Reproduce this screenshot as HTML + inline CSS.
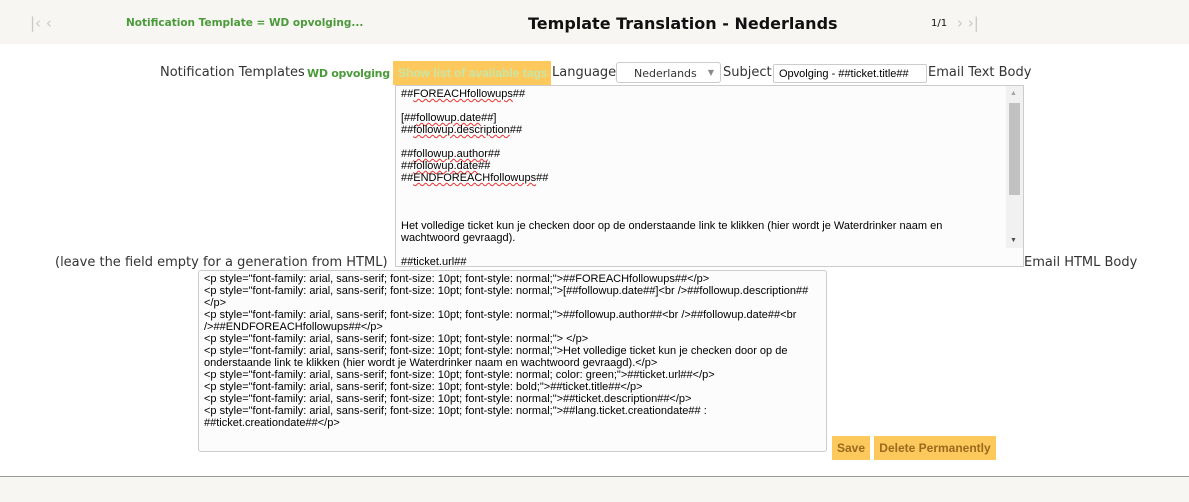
<!DOCTYPE html>
<html><head><style>
body{margin:0;width:1189px;height:501px;position:relative;background:#fff;font-family:"DejaVu Sans",Verdana,sans-serif;overflow:hidden}
.a{position:absolute;white-space:nowrap}
.hdr{position:absolute;left:0;top:0;width:1189px;height:44px;background:#f7f6f2}
.lbl{font-size:13px;color:#333}
.ta{position:absolute;background:#fcfcfc;border:1px solid #ccc;font-family:"Liberation Sans",Arial,sans-serif;font-size:11px;line-height:12px;color:#000;box-sizing:border-box;overflow:hidden}
.btn{position:absolute;background:#fdc95c;color:#9a6a1e;font-family:"Liberation Sans",Arial,sans-serif;font-weight:bold;font-size:12px;text-align:center;line-height:24px;height:24px}
u{text-decoration:underline wavy #e33;text-decoration-thickness:1px}
</style></head><body>
<div class="hdr"></div>
<div class="a" style="left:30px;top:14px;font-size:15px;color:#c8c8c8">|‹ ‹</div>
<div class="a" style="left:126px;top:17px;font-size:10.5px;font-weight:bold;color:#4a9a3a">Notification Template = WD opvolging...</div>
<div class="a" style="left:528px;top:14px;font-size:16px;font-weight:bold;color:#111">Template Translation - Nederlands</div>
<div class="a" style="left:931px;top:18px;font-size:10px;color:#111">1/1</div>
<div class="a" style="left:957px;top:14px;font-size:15px;color:#c8c8c8">› ›|</div>

<div class="a lbl" style="left:160px;top:65px">Notification Templates</div>
<div class="a" style="left:307px;top:67px;font-size:11px;font-weight:bold;color:#4a9a3a;letter-spacing:-0.3px">WD opvolging</div>
<div class="a" style="left:393px;top:61px;width:158px;height:24px;background:#fdc95c"></div>
<div class="a" style="left:398px;top:66px;font-family:'Liberation Sans',Arial;font-weight:bold;font-size:12px;color:#c6e6a8">Show list of available tags</div>
<div class="a lbl" style="left:552px;top:65px">Language</div>
<div class="a" style="left:616px;top:62px;width:105px;height:21px;border:1px solid #ccc;border-radius:3px;box-sizing:border-box;font-size:11px;color:#333;padding:4px 0 0 17px">Nederlands<span style="position:absolute;right:6px;top:5px;font-size:8px;color:#888">▼</span></div>
<div class="a lbl" style="left:723px;top:65px">Subject</div>
<div class="a" style="left:773px;top:64px;width:154px;height:19px;border:1px solid #ccc;border-radius:2px;box-sizing:border-box;font-family:'Liberation Sans',Arial;font-size:11px;padding:3px 0 0 5px">Opvolging - ##ticket.title##</div>
<div class="a lbl" style="left:928px;top:65px">Email Text Body</div>

<div class="ta" style="left:395px;top:85px;width:629px;height:182px;padding:2px 20px 0 5px">##<u>FOREACHfollowups</u>##<br><br>[##<u>followup.date</u>##]<br>##<u>followup.description</u>##<br><br>##<u>followup.author</u>##<br>##<u>followup.date</u>##<br>##<u>ENDFOREACHfollowups</u>##<br><br><br><br>Het volledige ticket kun je checken door op de onderstaande link te klikken (hier wordt je Waterdrinker naam en wachtwoord gevraagd).<br><br>##<u>ticket.url</u>##
<div style="position:absolute;right:0;top:0;width:17px;height:162px;background:#f1f1f1"><div style="position:absolute;left:3px;top:17px;width:11px;height:92px;background:#c1c1c1"></div><div style="position:absolute;left:4px;top:2px;font-size:7px;color:#a3a3a3">▲</div><div style="position:absolute;left:4px;top:149px;font-size:7px;color:#505050">▼</div></div></div>

<div class="a lbl" style="left:55px;top:255px">(leave the field empty for a generation from HTML)</div>
<div class="a lbl" style="left:1024px;top:255px">Email HTML Body</div>

<div class="ta" style="left:198px;top:270px;width:629px;height:182px;padding:2px 6px 0 5px;border-radius:3px;white-space:normal">&lt;p style="font-family: arial, sans-serif; font-size: 10pt; font-style: normal;"&gt;##FOREACHfollowups##&lt;/p&gt;<br>&lt;p style="font-family: arial, sans-serif; font-size: 10pt; font-style: normal;"&gt;[##followup.date##]&lt;br /&gt;##followup.description##<br>&lt;/p&gt;<br>&lt;p style="font-family: arial, sans-serif; font-size: 10pt; font-style: normal;"&gt;##followup.author##&lt;br /&gt;##followup.date##&lt;br<br>/&gt;##ENDFOREACHfollowups##&lt;/p&gt;<br>&lt;p style="font-family: arial, sans-serif; font-size: 10pt; font-style: normal;"&gt; &lt;/p&gt;<br>&lt;p style="font-family: arial, sans-serif; font-size: 10pt; font-style: normal;"&gt;Het volledige ticket kun je checken door op de<br>onderstaande link te klikken (hier wordt je Waterdrinker naam en wachtwoord gevraagd).&lt;/p&gt;<br>&lt;p style="font-family: arial, sans-serif; font-size: 10pt; font-style: normal; color: green;"&gt;##ticket.url##&lt;/p&gt;<br>&lt;p style="font-family: arial, sans-serif; font-size: 10pt; font-style: bold;"&gt;##ticket.title##&lt;/p&gt;<br>&lt;p style="font-family: arial, sans-serif; font-size: 10pt; font-style: normal;"&gt;##ticket.description##&lt;/p&gt;<br>&lt;p style="font-family: arial, sans-serif; font-size: 10pt; font-style: normal;"&gt;##lang.ticket.creationdate## :<br>##ticket.creationdate##&lt;/p&gt;</div>

<div class="btn" style="left:832px;top:436px;width:38px">Save</div>
<div class="btn" style="left:874px;top:436px;width:122px">Delete Permanently</div>

<div class="a" style="left:0;top:476px;width:1189px;height:25px;background:#f7f6f2;border-top:1px solid #999"></div>
</body></html>
